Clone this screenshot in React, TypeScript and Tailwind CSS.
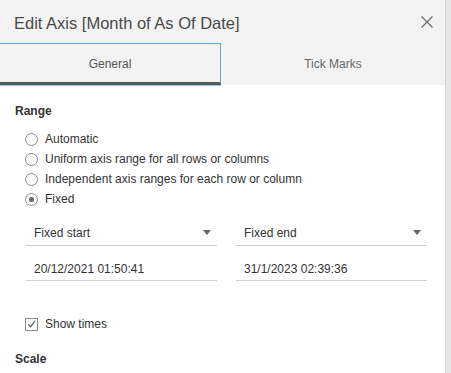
import { useState } from "react";

function Radio({ label, checked }: { label: string; checked?: boolean }) {
  return (
    <div className="flex h-[20px] items-center gap-[7px]">
      <span className="flex h-[13px] w-[13px] items-center justify-center rounded-full border border-[#8a8a8a] bg-white">
        {checked && <span className="h-[5px] w-[5px] rounded-full bg-[#666]" />}
      </span>
      <span>{label}</span>
    </div>
  );
}

function Dropdown({ label }: { label: string }) {
  return (
    <div className="flex h-[26px] w-[191px] items-center justify-between border-b border-[#cfcfcf] pl-[8px] pr-[6px]">
      <span>{label}</span>
      <svg width="8" height="5" viewBox="0 0 8 5">
        <path d="M0 0 L8 0 L4 5 Z" fill="#666" />
      </svg>
    </div>
  );
}

function DateInput({ value }: { value: string }) {
  return (
    <div className="flex h-[23px] w-[191px] items-center border-b border-[#cfcfcf] pl-[8px]">
      {value}
    </div>
  );
}

export default function App() {
  const [tab, setTab] = useState("general");

  return (
    <div className="flex h-[373px] w-[451px] overflow-hidden bg-white font-['Liberation_Sans',Arial,sans-serif] text-[12px] text-[#333]">
      <div className="flex w-[445px] flex-col">
        <div className="bg-[#f3f3f3]">
          <div className="flex h-[43px] items-center justify-between pl-[14px] pr-[12px]">
            <div className="pt-[3px] text-[16.5px] text-[#4a4a4a]">Edit Axis [Month of As Of Date]</div>
            <svg width="12" height="12" viewBox="0 0 12 12" className="mt-[1px]">
              <path d="M0.5 0.5 L11.5 11.5 M11.5 0.5 L0.5 11.5" stroke="#6a6a6a" strokeWidth="1.2" />
            </svg>
          </div>
          <div className="flex h-[42px]">
            <button
              onClick={() => setTab("general")}
              className={
                tab === "general"
                  ? "h-[42px] w-[221px] border-t border-r border-[#5aa6e0] border-b-[3px] border-b-[#5a5a5a] pt-[1px] text-[#555] shadow-[0_1px_0_#8fc3ea]"
                  : "h-[42px] w-[221px] text-[#666]"
              }
            >
              General
            </button>
            <button
              onClick={() => setTab("tick")}
              className={
                tab === "tick"
                  ? "h-[42px] flex-1 border-t border-l border-[#5aa6e0] border-b-[3px] border-b-[#5a5a5a] pt-[1px] text-[#555]"
                  : "h-[42px] flex-1 text-[#666]"
              }
            >
              Tick Marks
            </button>
          </div>
        </div>

        <div className="flex flex-col pl-[15px] pt-[16px]">
          <div className="h-[20px] font-bold leading-[20px]">Range</div>

          <div className="mt-[8px] flex flex-col pl-[10px]">
            <Radio label="Automatic" />
            <Radio label="Uniform axis range for all rows or columns" />
            <Radio label="Independent axis ranges for each row or column" />
            <Radio label="Fixed" checked />
          </div>

          <div className="mt-[11px] flex gap-[19px] pl-[11px]">
            <Dropdown label="Fixed start" />
            <Dropdown label="Fixed end" />
          </div>

          <div className="mt-[12px] flex gap-[19px] pl-[11px]">
            <DateInput value="20/12/2021 01:50:41" />
            <DateInput value="31/1/2023 02:39:36" />
          </div>

          <div className="mt-[33px] flex h-[20px] items-center gap-[7px] pl-[10px]">
            <span className="flex h-[13px] w-[13px] items-center justify-center border border-[#8a8a8a] bg-white">
              <svg width="9" height="8" viewBox="0 0 9 8">
                <path d="M1 4 L3.5 6.8 L8 0.8" fill="none" stroke="#555" strokeWidth="1.1" />
              </svg>
            </span>
            <span>Show times</span>
          </div>

          <div className="mt-[15px] h-[20px] font-bold leading-[20px]">Scale</div>
        </div>
      </div>
      <div className="w-[6px] border-l border-[#d4d4d4] bg-[#e6e6e6]" />
    </div>
  );
}
